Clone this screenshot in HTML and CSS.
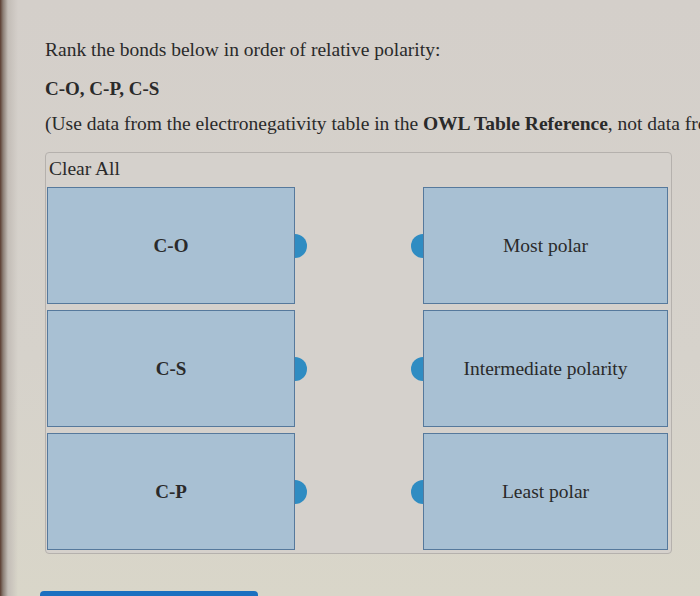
FILE: index.html
```html
<!DOCTYPE html>
<html lang="en">
<head>
    <meta charset="UTF-8">
    <title>Rank the bonds</title>
    <link rel="stylesheet" href="styles.css">
</head>
<body>
<div class="page">
    <p class="prompt">Rank the bonds below in order of relative polarity:</p>
    <p class="bonds">C-O, C-P, C-S</p>
    <p class="prompt note">(Use data from the electronegativity table in the <b>OWL Table Reference</b>, not data from another source.)</p>

    <!-- Drag and drop ranking -->
    <div class="rank-box">
        <div class="clear-all">Clear All</div>
        <div class="rank-row">
            <div class="item item-left"><b>C-O</b></div>
            <div class="item item-right">Most polar</div>
        </div>
        <div class="rank-row">
            <div class="item item-left"><b>C-S</b></div>
            <div class="item item-right">Intermediate polarity</div>
        </div>
        <div class="rank-row">
            <div class="item item-left"><b>C-P</b></div>
            <div class="item item-right">Least polar</div>
        </div>
    </div>

    <div class="submit-btn"></div>
</div>
</body>
</html>
```

FILE: styles.css
```css
* {
    box-sizing: border-box;
    margin: 0;
    padding: 0;
}

html, body {
    height: 100%;
    overflow: hidden;
}

body {
    font-family: "Liberation Serif", "Times New Roman", serif;
    color: #2a2a2a;
    background:
        linear-gradient(90deg, #5a3c30 0, #8a7d74 3px, #c3bdb7 8px, rgba(211, 206, 201, 0) 18px),
        linear-gradient(180deg, #d4cfca 0%, #d6d2cb 60%, #d9d6c9 100%);
}

.page {
    padding: 39px 0 0 45px;
    white-space: nowrap;
}

.prompt {
    font-size: 19.5px;
    line-height: 22px;
    margin-bottom: 17px;
}

.note {
    overflow: hidden;
}

.bonds {
    font-size: 19px;
    font-weight: bold;
    line-height: 22px;
    margin-bottom: 13px;
}

.prompt b {
    font-weight: bold;
}

.rank-box {
    width: 627px;
    margin-top: 17px;
    border: 1px solid #b5b1ad;
    border-radius: 4px;
    padding: 0 3px 3px 1px;
    background: #d5d1cc;
}

.clear-all {
    font-size: 19.5px;
    line-height: 22px;
    height: 34px;
    padding: 5px 0 0 2px;
}

.rank-row {
    display: flex;
    justify-content: space-between;
    margin-bottom: 6px;
}

.rank-row:last-child {
    margin-bottom: 0;
}

.item {
    position: relative;
    height: 117px;
    display: flex;
    align-items: center;
    justify-content: center;
    background: #a8c0d3;
    border: 1px solid #56799c;
    font-size: 19.5px;
}

.item-left {
    width: 248px;
    font-size: 19px;
}

.item-right {
    width: 245px;
}

/* connector tabs */
.item-left::after,
.item-right::before {
    content: "";
    position: absolute;
    top: 50%;
    width: 12px;
    height: 24px;
    margin-top: -12px;
    background: #2f8cc2;
}

.item-left::after {
    right: -13px;
    border-radius: 0 12px 12px 0;
}

.item-right::before {
    left: -13px;
    border-radius: 12px 0 0 12px;
}

.submit-btn {
    width: 218px;
    height: 12px;
    margin: 37px 0 0 -5px;
    background: #1b70c0;
    border-radius: 4px 4px 0 0;
}
```
